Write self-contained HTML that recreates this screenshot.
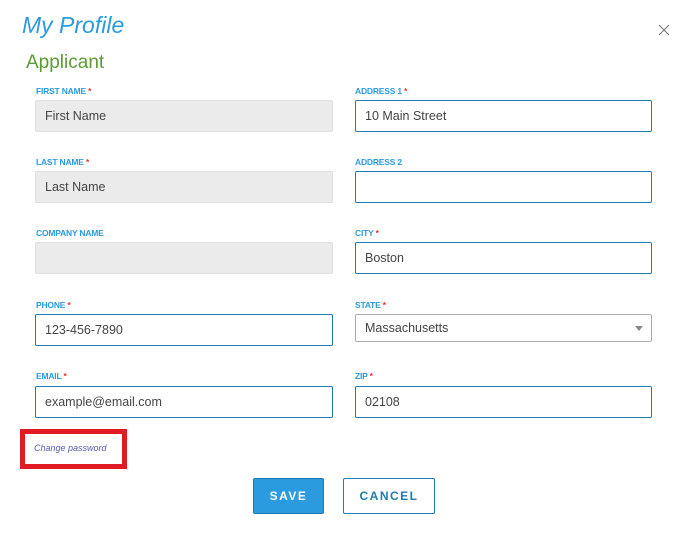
<!DOCTYPE html>
<html><head><style>
body{margin:0;width:687px;height:537px;background:#fff;font-family:"Liberation Sans",sans-serif;position:relative;overflow:hidden}
.a{position:absolute}
.t{left:22px;top:12px;font-size:23px;font-style:italic;color:#2b9be0}
.h{left:26px;top:52px;font-size:19px;color:#5c9c32}
.l{font-size:8.5px;font-weight:bold;color:#2b9be0;letter-spacing:-0.2px}
.l b{color:#e0312f}
.i{box-sizing:border-box;height:32px;border:1px solid #1f7bb0;border-radius:2px;font-size:12.5px;color:#444;padding:0 0 0 9px;line-height:31px}
.g{background:#ebebeb;border-color:#e0e0e0}
.L{left:35px;width:298px}.R{left:355px;width:297px}
</style></head><body>
<div class="a t">My Profile</div>
<svg class="a" style="left:658px;top:24px" width="12" height="12"><path d="M1 1L11 11M11 1L1 11" stroke="#777" stroke-width="1.1"/></svg>
<div class="a h">Applicant</div>

<div class="a l" style="left:36px;top:86px">FIRST NAME <b>*</b></div>
<div class="a i g L" style="top:100px">First Name</div>
<div class="a l" style="left:355px;top:86px">ADDRESS 1 <b>*</b></div>
<div class="a i R" style="top:100px">10 Main Street</div>

<div class="a l" style="left:36px;top:157px">LAST NAME <b>*</b></div>
<div class="a i g L" style="top:171px">Last Name</div>
<div class="a l" style="left:355px;top:157px">ADDRESS 2</div>
<div class="a i R" style="top:171px"></div>

<div class="a l" style="left:36px;top:228px">COMPANY NAME</div>
<div class="a i g L" style="top:242px"></div>
<div class="a l" style="left:355px;top:228px">CITY <b>*</b></div>
<div class="a i R" style="top:242px">Boston</div>

<div class="a l" style="left:36px;top:300px">PHONE <b>*</b></div>
<div class="a i L" style="top:314px">123-456-7890</div>
<div class="a l" style="left:355px;top:300px">STATE <b>*</b></div>
<div class="a i R" style="top:314px;height:28px;line-height:26px;border-color:#aaa">Massachusetts<span style="position:absolute;right:8px;top:11px;border:4px solid transparent;border-top:5px solid #888;border-bottom:0"></span></div>

<div class="a l" style="left:36px;top:371px">EMAIL <b>*</b></div>
<div class="a i L" style="top:386px">example@email.com</div>
<div class="a l" style="left:355px;top:371px">ZIP <b>*</b></div>
<div class="a i R" style="top:386px">02108</div>

<div class="a" style="left:20px;top:429px;width:107px;height:40px;box-sizing:border-box;border:5px solid #e01b24"></div>
<div class="a" style="left:34px;top:443px;font-size:9px;font-style:italic;color:#5a5ab0">Change password</div>

<div class="a" style="left:253px;top:478px;width:71px;height:36px;background:#2b9be0;border:1px solid #1f7bb0;box-sizing:border-box;border-radius:2px;color:#fff;font-weight:bold;font-size:12px;letter-spacing:1.5px;text-align:center;line-height:34px">SAVE</div>
<div class="a" style="left:343px;top:478px;width:92px;height:36px;background:#fff;border:1px solid #1f7bb0;box-sizing:border-box;border-radius:2px;color:#1f7bb0;font-weight:bold;font-size:12px;letter-spacing:1.5px;text-align:center;line-height:34px">CANCEL</div>
</body></html>
